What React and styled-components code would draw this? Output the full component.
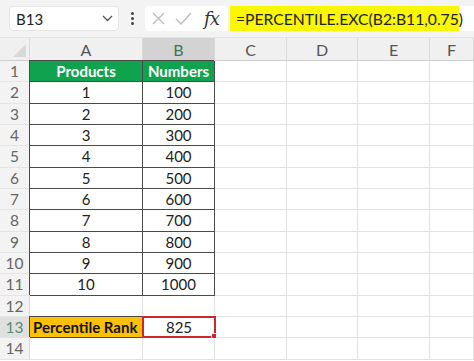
import React from "react";
import styled, { createGlobalStyle } from "styled-components";

const GlobalStyle = createGlobalStyle`
  html, body {
    margin: 0;
    padding: 0;
    background: #ffffff;
    overflow: hidden;
  }
  body {
    font-family: Lato, "Open Sans", "Liberation Sans", sans-serif;
  }
`;

const Sheet = styled.div`
  width: 474px;
  height: 361px;
  overflow: hidden;
  background: #fff;
`;

const Toolbar = styled.div`
  height: 38px;
  box-sizing: border-box;
  padding: 6px 0 6px 9px;
  display: flex;
  align-items: stretch;
  background: #f3f3f3;
  border-bottom: 1px solid #e4e4e4;
`;

const NameBox = styled.div`
  width: 110px;
  box-sizing: border-box;
  background: #fff;
  border: 1px solid #e6e6e6;
  border-radius: 4px;
  display: flex;
  align-items: center;
  justify-content: space-between;
  padding: 0 5px 0 6px;
  font-size: 15px;
  color: #222;
`;

const Dots = styled.div`
  width: 26px;
  display: flex;
  flex-direction: column;
  align-items: center;
  justify-content: center;
  gap: 2px;
  span {
    width: 3px;
    height: 3px;
    border-radius: 50%;
    background: #444;
  }
`;

const FxBox = styled.div`
  width: 83px;
  box-sizing: border-box;
  background: #fff;
  border-radius: 4px;
  display: flex;
  align-items: center;
  padding: 0 6px 0 7px;
  gap: 10px;
`;

const FxText = styled.span`
  font-family: "DejaVu Serif", "Liberation Serif", serif;
  font-style: italic;
  font-size: 18px;
  color: #333;
  margin-left: 2px;
  letter-spacing: -1px;
`;

const FormulaBar = styled.div`
  flex: 1;
  margin-left: 2px;
  background: #fff;
  border-radius: 4px 0 0 4px;
  display: flex;
  align-items: stretch;
`;

const Highlight = styled.div`
  background: #fbf700;
  padding: 0 0 0 6px;
  width: 229px;
  box-sizing: border-box;
  display: flex;
  align-items: center;
  font-size: 15.7px;
  color: #222;
  white-space: nowrap;
`;

const Grid = styled.div`
  display: grid;
  grid-template-columns: 30px 113px 72px 72px 71px 72px 44px;
  grid-template-rows: 23px repeat(14, 21.33px);
`;

const ColHead = styled.div`
  box-sizing: border-box;
  background: ${p => (p.$sel ? "#d3d3d3" : "#f0f0f0")};
  color: ${p => (p.$sel ? "#3d7656" : "#555")};
  border-right: 1px solid #dadada;
  border-bottom: 1px solid #cfcfcf;
  display: flex;
  align-items: center;
  justify-content: center;
  font-size: 16px;
`;

const Corner = styled.div`
  position: relative;
  box-sizing: border-box;
  background: #f0f0f0;
  border-right: 1px solid #dadada;
  border-bottom: 1px solid #cfcfcf;
  &::after {
    content: "";
    position: absolute;
    right: 3px;
    bottom: 3px;
    width: 0;
    height: 0;
    border-left: 13px solid transparent;
    border-bottom: 13px solid #d8d8d8;
  }
`;

const RowHead = styled.div`
  box-sizing: border-box;
  background: ${p => (p.$sel ? "#e0e0e0" : "#f3f3f3")};
  color: ${p => (p.$sel ? "#5a8c70" : "#666")};
  border-right: 1px solid #dadada;
  border-bottom: 1px solid #e4e4e4;
  display: flex;
  align-items: center;
  justify-content: center;
  font-size: 15.5px;
`;

const Cell = styled.div`
  position: relative;
  box-sizing: border-box;
  border-right: 1px solid ${p => (p.$boxed ? "#4a4a4a" : "#e2e2e2")};
  border-bottom: 1px solid ${p => (p.$boxed ? "#4a4a4a" : "#e2e2e2")};
  box-shadow: ${p => (p.$boxed ? "-1px -1px 0 #4a4a4a" : "none")};
  background: ${p => p.$fill || "#fff"};
  color: ${p => p.$color || "#222"};
  font-weight: ${p => (p.$bold ? 700 : 400)};
  font-size: 15px;
  display: flex;
  align-items: center;
  justify-content: ${p => (p.$left ? "flex-start" : "center")};
  padding-left: ${p => (p.$left ? "3px" : "0")};
  white-space: nowrap;
`;

const ActiveCell = styled(Cell)`
  z-index: 1;
  border: 2px solid #d1242c;
  box-shadow: none;
  margin: -1px -1px 0 -1px;
  &::after {
    content: "";
    position: absolute;
    right: -2px;
    bottom: -2px;
    width: 4px;
    height: 4px;
    background: #d1242c;
    border-top: 1px solid #fff;
    border-left: 1px solid #fff;
  }
`;

const columns = ["A", "B", "C", "D", "E", "F"];
const data = [
  [1, 100], [2, 200], [3, 300], [4, 400], [5, 500],
  [6, 600], [7, 700], [8, 800], [9, 900], [10, 1000],
];

const Blank = () => (
  <>
    <Cell />
    <Cell />
    <Cell />
    <Cell />
  </>
);

export default function App() {
  return (
    <Sheet>
      <GlobalStyle />
      <Toolbar>
        <NameBox>
          <span>B13</span>
          <svg width="11" height="7" viewBox="0 0 11 7">
            <path d="M1 1l4.5 4.5L10 1" fill="none" stroke="#555" strokeWidth="1.3" />
          </svg>
        </NameBox>
        <Dots>
          <span />
          <span />
          <span />
        </Dots>
        <FxBox>
          <svg width="13" height="13" viewBox="0 0 13 13">
            <path d="M1 1l11 11M12 1L1 12" stroke="#bdbdbd" strokeWidth="1.4" />
          </svg>
          <svg width="17" height="13" viewBox="0 0 17 13">
            <path d="M1 7l5 5L16 1" fill="none" stroke="#bdbdbd" strokeWidth="1.4" />
          </svg>
          <FxText>fx</FxText>
        </FxBox>
        <FormulaBar>
          <Highlight>=PERCENTILE.EXC(B2:B11,0.75)</Highlight>
        </FormulaBar>
      </Toolbar>
      <Grid>
        <Corner />
        {columns.map(c => (
          <ColHead key={c} $sel={c === "B"}>{c}</ColHead>
        ))}

        <RowHead>1</RowHead>
        <Cell $boxed $fill="#0fa34e" $color="#fff" $bold>Products</Cell>
        <Cell $boxed $fill="#0fa34e" $color="#fff" $bold>Numbers</Cell>
        <Blank />

        {data.map(([p, n], i) => (
          <React.Fragment key={p}>
            <RowHead>{i + 2}</RowHead>
            <Cell $boxed>{p}</Cell>
            <Cell $boxed>{n}</Cell>
            <Blank />
          </React.Fragment>
        ))}

        <RowHead>12</RowHead>
        <Cell />
        <Cell />
        <Blank />

        <RowHead $sel>13</RowHead>
        <Cell $boxed $fill="#ffc000" $color="#111" $bold $left>Percentile Rank</Cell>
        <ActiveCell>825</ActiveCell>
        <Blank />

        <RowHead>14</RowHead>
        <Cell />
        <Cell />
        <Blank />
      </Grid>
    </Sheet>
  );
}
